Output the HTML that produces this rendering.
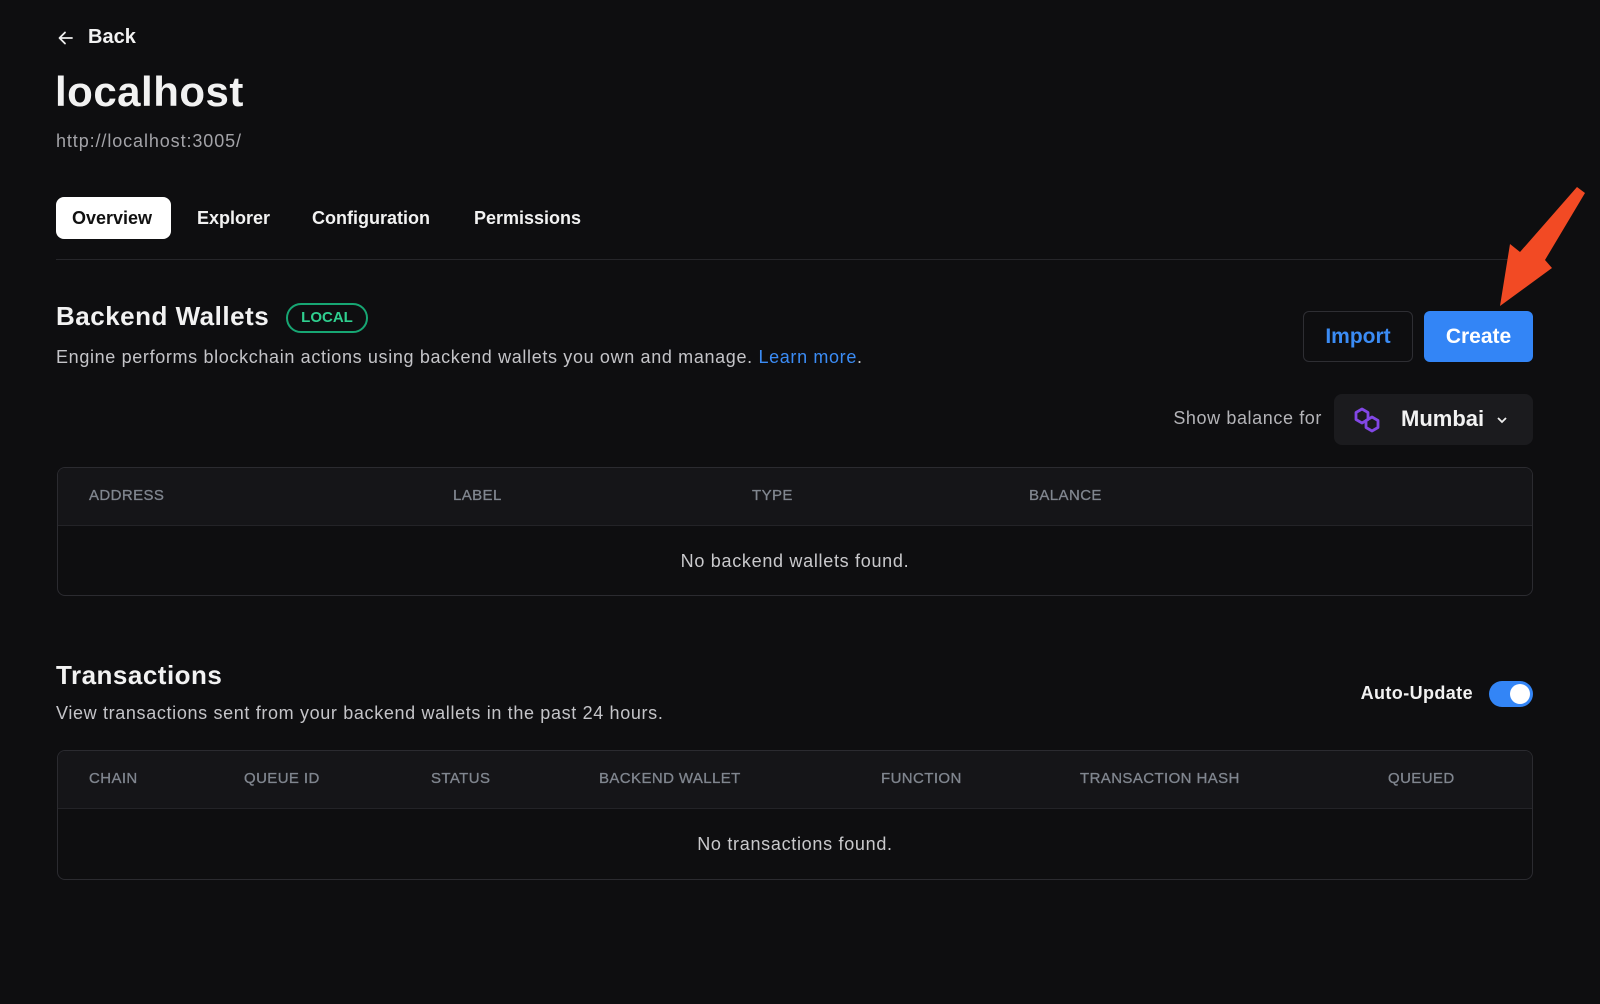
<!DOCTYPE html>
<html><head><meta charset="utf-8"><style>
*{margin:0;padding:0;box-sizing:border-box}
body{width:1600px;height:1004px;background:#0e0e10;font-family:"Liberation Sans",sans-serif;color:#f2f2f2;position:relative;overflow:hidden}
.a{position:absolute;white-space:nowrap}
.tab{font-size:18px;font-weight:bold;line-height:42px;top:197px}
.th{font-size:15px;color:#80868f;top:487px;letter-spacing:0.4px;-webkit-text-stroke:0.3px #80868f}
.t2 .th{top:770px}
.tbl{position:absolute;left:57px;width:1476px;border:1px solid #2b2b30;border-radius:8px;overflow:hidden}
.tbl .hd{height:58px;background:#151518;border-bottom:1px solid #232327}
</style></head><body>
<svg class="a" style="left:57px;top:29px" width="18" height="18" viewBox="0 0 18 18"><path d="M15 9H3M8 3.5L2.5 9 8 14.5" fill="none" stroke="#eee" stroke-width="1.8" stroke-linecap="round" stroke-linejoin="round"/></svg>
<div class="a" style="left:88px;top:26px;font-size:20px;font-weight:bold">Back</div>
<div class="a" style="left:55px;top:68px;font-size:42px;font-weight:bold;letter-spacing:0.5px">localhost</div>
<div class="a" style="left:56px;top:131px;font-size:18px;color:#a3a3a8;letter-spacing:0.9px">http://localhost:3005/</div>
<div class="a" style="left:56px;top:197px;width:115px;height:42px;background:#fff;border-radius:8px"></div>
<div class="a tab" style="left:72px;color:#111">Overview</div>
<div class="a tab" style="left:197px">Explorer</div>
<div class="a tab" style="left:312px">Configuration</div>
<div class="a tab" style="left:474px">Permissions</div>
<div class="a" style="left:56px;top:259px;width:1477px;height:1px;background:#26262a"></div>
<div class="a" style="left:56px;top:301px;font-size:26px;font-weight:bold;letter-spacing:0.5px">Backend Wallets</div>
<div class="a" style="left:286px;top:303px;width:82px;height:30px;border:2px solid #17a673;border-radius:15px;color:#2fcf8f;font-size:15px;font-weight:bold;text-align:center;line-height:26px">LOCAL</div>
<div class="a" style="left:56px;top:347px;font-size:18px;color:#c4c4c8;letter-spacing:0.65px">Engine performs blockchain actions using backend wallets you own and manage. <span style="color:#3b8cf5">Learn more</span>.</div>
<div class="a" style="left:1303px;top:311px;width:110px;height:51px;border:1px solid #2e2e33;border-radius:6px;color:#3b8cf5;font-size:21px;font-weight:bold;text-align:center;line-height:49px">Import</div>
<div class="a" style="left:1424px;top:311px;width:109px;height:51px;background:#3385f6;border-radius:6px;color:#fff;font-size:21px;font-weight:bold;text-align:center;line-height:51px">Create</div>
<svg class="a" style="left:1490px;top:180px" width="110" height="135" viewBox="0 0 110 135"><path d="M87 7 L95 13 L55 80 L62 88 L10 126 L20 64 L30 72 Z" fill="#f24a24"/></svg>
<div class="a" style="right:278px;top:408px;font-size:18px;color:#b4b4b8;letter-spacing:0.6px">Show balance for</div>
<div class="a" style="left:1334px;top:394px;width:199px;height:51px;background:#1b1b1e;border-radius:8px"></div>
<svg class="a" style="left:1352px;top:406px" width="30" height="28" viewBox="0 0 30 28"><path d="M4 6.5l6-3.5 6 3.5v7l-6 3.5-6-3.5zM14 14.5l6-3.5 6 3.5v7l-6 3.5-6-3.5z" fill="none" stroke="#8247e5" stroke-width="2.8" stroke-linejoin="round"/></svg>
<div class="a" style="left:1401px;top:406px;font-size:22px;font-weight:bold">Mumbai</div>
<svg class="a" style="left:1496px;top:415px" width="12" height="10" viewBox="0 0 12 10"><path d="M2 3l4 4 4-4" fill="none" stroke="#eee" stroke-width="1.8"/></svg>
<div class="tbl" style="top:467px;height:129px"><div class="hd"></div></div>
<div class="a th" style="left:89px">ADDRESS</div>
<div class="a th" style="left:453px">LABEL</div>
<div class="a th" style="left:752px">TYPE</div>
<div class="a th" style="left:1029px">BALANCE</div>
<div class="a" style="left:57px;width:1476px;top:551px;text-align:center;font-size:18px;color:#c9c9cc;letter-spacing:0.7px">No backend wallets found.</div>
<div class="a" style="left:56px;top:660px;font-size:26px;font-weight:bold;letter-spacing:0.5px">Transactions</div>
<div class="a" style="left:56px;top:703px;font-size:18px;color:#c4c4c8;letter-spacing:0.65px">View transactions sent from your backend wallets in the past 24 hours.</div>
<div class="a" style="right:127px;top:683px;font-size:18px;font-weight:bold;letter-spacing:0.4px">Auto-Update</div>
<div class="a" style="left:1489px;top:681px;width:44px;height:26px;background:#3385f6;border-radius:13px"><div style="position:absolute;right:3px;top:3px;width:20px;height:20px;border-radius:50%;background:#fff"></div></div>
<div class="tbl" style="top:750px;height:130px"><div class="hd"></div></div>
<div class="t2">
<div class="a th" style="left:89px">CHAIN</div>
<div class="a th" style="left:244px">QUEUE ID</div>
<div class="a th" style="left:431px">STATUS</div>
<div class="a th" style="left:599px">BACKEND WALLET</div>
<div class="a th" style="left:881px">FUNCTION</div>
<div class="a th" style="left:1080px">TRANSACTION HASH</div>
<div class="a th" style="left:1388px">QUEUED</div>
</div>
<div class="a" style="left:57px;width:1476px;top:834px;text-align:center;font-size:18px;color:#c9c9cc;letter-spacing:0.7px">No transactions found.</div>
</body></html>
